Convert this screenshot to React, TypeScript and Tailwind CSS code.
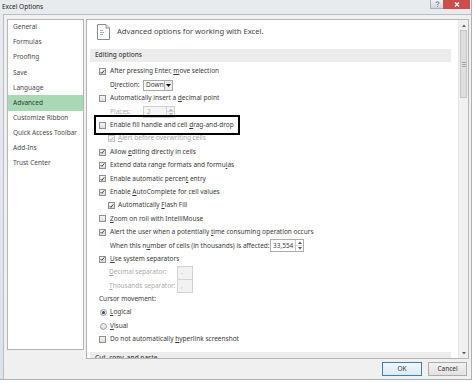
import React from 'react';

// Excel Options → Advanced, small Windows 8 style dialog

const Check = ({ checked = false, disabled = false }: { checked?: boolean; disabled?: boolean }) => (
  <span
    className={`w-[7px] h-[7px] shrink-0 border flex items-center justify-center ${
      disabled ? 'border-[#c8c8c8] bg-[#f4f4f4]' : 'border-[#8e8f8f] bg-gradient-to-b from-[#f6f6f6] to-[#dedede]'
    }`}
  >
    {checked && (
      <svg width="6" height="6" viewBox="0 0 6 6">
        <path d="M0.8 3.1 L2.3 4.6 L5.2 1" fill="none" stroke={disabled ? '#a8a8a8' : '#333'} strokeWidth="1.1" />
      </svg>
    )}
  </span>
);

const Radio = ({ checked = false }: { checked?: boolean }) => (
  <span className="w-[7px] h-[7px] shrink-0 rounded-full border border-[#9a9a9a] bg-gradient-to-b from-[#f6f6f6] to-[#dedede] flex items-center justify-center">
    {checked && <span className="w-[3px] h-[3px] rounded-full bg-[#2e4a6b]" />}
  </span>
);

const Spin = ({ disabled = false }: { disabled?: boolean }) => (
  <span className={`w-[8px] self-stretch flex flex-col border-l ${disabled ? 'border-[#d4d4d4]' : 'border-[#c8c8c8]'}`}>
    <span className="flex-1 flex items-center justify-center border-b border-[#d8d8d8]">
      <svg width="4" height="3" viewBox="0 0 4 3"><path d="M0 3 L2 0.5 L4 3Z" fill={disabled ? '#b8b8b8' : '#555'} /></svg>
    </span>
    <span className="flex-1 flex items-center justify-center">
      <svg width="4" height="3" viewBox="0 0 4 3"><path d="M0 0 L2 2.5 L4 0Z" fill={disabled ? '#b8b8b8' : '#555'} /></svg>
    </span>
  </span>
);

const U = ({ children }: { children: React.ReactNode }) => <span className="underline underline-offset-1">{children}</span>;

const Row = ({ pl, children, className = '' }: { pl: string; children: React.ReactNode; className?: string }) => (
  <div className={`h-[13.4px] shrink-0 flex items-center whitespace-nowrap ${pl} ${className}`}>{children}</div>
);

const sidebar = [
  'General',
  'Formulas',
  'Proofing',
  'Save',
  'Language',
  'Advanced',
  'Customize Ribbon',
  'Quick Access Toolbar',
  'Add-Ins',
  'Trust Center',
];

export default function App() {
  return (
    <div className="w-[474px] h-[383px] bg-white overflow-hidden font-['Noto_Sans',sans-serif] text-[6.5px] leading-none text-[#3a3a3a]">
      <div className="w-[472px] h-[380px] flex flex-col bg-gradient-to-b from-[#e8ebee] to-[#dde2e7] border-r border-b border-[#a9b1ba]">
        {/* title bar */}
        <div className="h-[14px] shrink-0 flex justify-between items-start">
          <span className="pl-[2px] pt-[4px] text-[#1e1e1e]">Excel Options</span>
          <div className="flex mr-[1px]">
            <span className="w-[13px] h-[9px] bg-gradient-to-b from-[#eef1f4] to-[#cfd6dd] border-l border-b border-[#aab3bd] flex items-center justify-center">
              <svg width="5" height="6" viewBox="0 0 5 6">
                <path d="M1 1.8 C1 0.4 4 0.4 4 1.8 C4 2.8 2.5 2.8 2.5 4" fill="none" stroke="#5a6572" strokeWidth="0.9" />
                <circle cx="2.5" cy="5.3" r="0.5" fill="#5a6572" />
              </svg>
            </span>
            <span className="w-[27px] h-[9px] bg-[#c94f4f] flex items-center justify-center">
              <svg width="6" height="5" viewBox="0 0 6 5">
                <path d="M1 0.5 L5 4.5 M5 0.5 L1 4.5" stroke="#fff" strokeWidth="1.2" />
              </svg>
            </span>
          </div>
        </div>

        {/* body */}
        <div className="flex-1 ml-[3px] border-l border-t border-[#b7bec6] bg-[#f0f0f0] flex flex-col">
          <div className="flex items-start pl-[3px] pt-[4px] gap-[2px]">
            {/* navigation */}
            <div className="w-[77px] h-[331px] border border-[#b5b5b5] bg-white flex flex-col">
              {sidebar.map((s) => (
                <div
                  key={s}
                  className={`h-[15.1px] shrink-0 flex items-center pl-[5px] ${
                    s === 'Advanced' ? 'bg-[#a8d8b4] text-[#2e3b33]' : 'text-[#4a4a4a]'
                  }`}
                >
                  {s}
                </div>
              ))}
            </div>

            {/* options pane */}
            <div className="w-[383px] h-[340px] border border-[#b5b5b5] bg-white flex overflow-hidden">
              <div className="flex-1 flex flex-col">
                <div className="h-[24px] shrink-0 flex items-center gap-[7px] pl-[10px]">
                  <svg width="13" height="16" viewBox="0 0 13 16">
                    <path d="M0.5 0.5 H9 L12.5 4 V15.5 H0.5 Z" fill="#fff" stroke="#8c8c8c" />
                    <path d="M9 0.5 V4 H12.5" fill="#f0f0f0" stroke="#8c8c8c" />
                    <path d="M3 6.5 H6 M3 8.5 H7 M3 10.5 H6" stroke="#7e9ab8" strokeWidth="0.8" />
                  </svg>
                  <span className="text-[7.6px] text-[#444]">Advanced options for working with Excel.</span>
                </div>
                <div className="mt-[5px] ml-[3px] mr-[7px] h-[13px] shrink-0 bg-[#ececec] flex items-center pl-[5px] font-medium text-[#3e3e3e]">
                  Editing options
                </div>
                <div className="mt-[3px] shrink-0 flex flex-col">
                  <Row pl="pl-[12px]" className="gap-[4px]">
                    <Check checked />
                    <span>After pressing Enter, <U>m</U>ove selection</span>
                  </Row>
                  <Row pl="pl-[23px]">
                    <span className="w-[33px]">D<U>i</U>rection:</span>
                    <span className="w-[30px] h-[11px] border border-[#a8a8a8] flex items-center">
                      <span className="flex-1 pl-[2px]">Down</span>
                      <span className="w-[8px] self-stretch border-l border-[#b0b0b0] bg-[#ececec] flex items-center justify-center">
                        <svg width="5" height="3" viewBox="0 0 5 3"><path d="M0 0 H5 L2.5 3Z" fill="#111" /></svg>
                      </span>
                    </span>
                  </Row>
                  <Row pl="pl-[12px]" className="gap-[4px]">
                    <Check />
                    <span>Automatically insert a <U>d</U>ecimal point</span>
                  </Row>
                  <Row pl="pl-[23px]" className="text-[#b0b0b0]">
                    <span className="w-[33px]">P<U>l</U>aces:</span>
                    <span className="w-[32px] h-[12px] border border-[#d0d0d0] bg-[#f5f5f5] flex items-center">
                      <span className="flex-1 pl-[3px]">2</span>
                      <Spin disabled />
                    </span>
                  </Row>
                  <Row pl="pl-[12px]" className="gap-[4px] relative">
                    <span className="absolute left-[7px] top-[-4px] w-[146px] h-[20px] border-2 border-black" />
                    <Check />
                    <span>Enable fill handle and cell <U>d</U>rag-and-drop</span>
                  </Row>
                  <Row pl="pl-[21px]" className="gap-[3px] text-[#a8a8a8]">
                    <Check checked disabled />
                    <span><U>A</U>lert before overwriting cells</span>
                  </Row>
                  <Row pl="pl-[12px]" className="gap-[4px]">
                    <Check checked />
                    <span>Allow <U>e</U>diting directly in cells</span>
                  </Row>
                  <Row pl="pl-[12px]" className="gap-[4px]">
                    <Check checked />
                    <span>Extend data range formats and formu<U>l</U>as</span>
                  </Row>
                  <Row pl="pl-[12px]" className="gap-[4px]">
                    <Check checked />
                    <span>Enable automatic percen<U>t</U> entry</span>
                  </Row>
                  <Row pl="pl-[12px]" className="gap-[4px]">
                    <Check checked />
                    <span>Enable <U>A</U>utoComplete for cell values</span>
                  </Row>
                  <Row pl="pl-[21px]" className="gap-[3px]">
                    <Check checked />
                    <span>Automatically <U>F</U>lash Fill</span>
                  </Row>
                  <Row pl="pl-[12px]" className="gap-[4px]">
                    <Check />
                    <span><U>Z</U>oom on roll with IntelliMouse</span>
                  </Row>
                  <Row pl="pl-[12px]" className="gap-[4px]">
                    <Check checked />
                    <span>Alert the user when a potentially <U>t</U>ime consuming operation occurs</span>
                  </Row>
                  <Row pl="pl-[23px]">
                    <span className="w-[160px]">When this n<U>u</U>mber of cells (in thousands) is affected:</span>
                    <span className="w-[34px] h-[13px] border border-[#acacac] flex items-center">
                      <span className="flex-1 pl-[2px]">33,554</span>
                      <Spin />
                    </span>
                  </Row>
                  <Row pl="pl-[12px]" className="gap-[4px]">
                    <Check checked />
                    <span><U>U</U>se system separators</span>
                  </Row>
                  <Row pl="pl-[22px]" className="text-[#acacac]">
                    <span className="w-[68px]"><U>D</U>ecimal separator:</span>
                    <span className="w-[16px] h-[14px] border border-[#d2d2d2] bg-[#f2f2f2] pl-[3px] flex items-center">.</span>
                  </Row>
                  <Row pl="pl-[22px]" className="text-[#acacac]">
                    <span className="w-[68px]"><U>T</U>housands separator:</span>
                    <span className="w-[16px] h-[14px] border border-[#d2d2d2] bg-[#f2f2f2] pl-[3px] flex items-center">,</span>
                  </Row>
                  <Row pl="pl-[12px]">
                    <span>Cursor movement:</span>
                  </Row>
                  <Row pl="pl-[13px]" className="gap-[3px]">
                    <Radio checked />
                    <span><U>L</U>ogical</span>
                  </Row>
                  <Row pl="pl-[13px]" className="gap-[3px]">
                    <Radio />
                    <span><U>V</U>isual</span>
                  </Row>
                  <Row pl="pl-[12px]" className="gap-[4px]">
                    <Check />
                    <span>Do not automatically <U>h</U>yperlink screenshot</span>
                  </Row>
                </div>
                <div className="mt-[6px] ml-[3px] mr-[7px] h-[13px] shrink-0 bg-[#ececec] flex items-center pl-[5px] font-medium text-[#3e3e3e]">
                  Cut, copy, and paste
                </div>
              </div>

              {/* scrollbar */}
              <div className="w-[10px] shrink-0 bg-[#f0f0f0] border-l border-[#e6e6e6] flex flex-col">
                <span className="h-[10px] flex items-center justify-center">
                  <svg width="4" height="3" viewBox="0 0 4 3"><path d="M0 3 L2 0.5 L4 3Z" fill="#606060" /></svg>
                </span>
                <span className="mx-[1px] h-[68px] bg-[#dedede] border border-[#c6c6c6] flex flex-col items-center justify-center gap-[1px]">
                  <span className="w-[4px] h-px bg-[#a8a8a8]" />
                  <span className="w-[4px] h-px bg-[#a8a8a8]" />
                  <span className="w-[4px] h-px bg-[#a8a8a8]" />
                </span>
                <span className="flex-1" />
                <span className="h-[10px] flex items-center justify-center">
                  <svg width="4" height="3" viewBox="0 0 4 3"><path d="M0 0 L2 2.5 L4 0Z" fill="#606060" /></svg>
                </span>
              </div>
            </div>
          </div>

          {/* footer */}
          <div className="flex-1 flex items-center justify-end gap-[6px] pr-[4px]">
            <button className="w-[40px] h-[14px] border border-[#3c7fb1] bg-gradient-to-b from-[#f2f8fc] to-[#dceaf5] text-[#333]">OK</button>
            <button className="w-[39px] h-[14px] border border-[#acacac] bg-gradient-to-b from-[#f2f2f2] to-[#e2e2e2] text-[#333]">Cancel</button>
          </div>
        </div>
      </div>
    </div>
  );
}
